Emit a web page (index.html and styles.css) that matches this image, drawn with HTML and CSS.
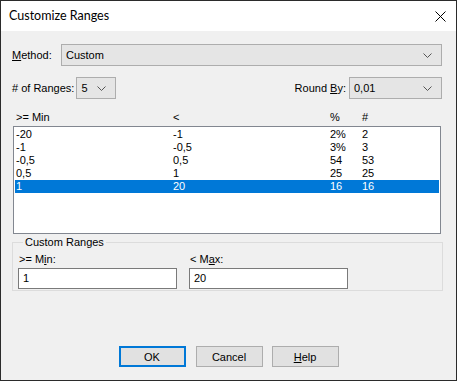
FILE: index.html
```html
<!DOCTYPE html>
<html>
<head>
<meta charset="utf-8">
<link rel="stylesheet" href="styles.css">
</head>
<body>
<div class="window">
  <div class="titlebar">
    <span class="title">Customize Ranges</span>
    <span class="close"><svg width="11" height="11" viewBox="0 0 11 11"><path d="M0.5 0.5 L10.5 10.5 M10.5 0.5 L0.5 10.5" stroke="#000" stroke-width="1" fill="none"/></svg></span>
  </div>
  <div class="content">
    <div class="row method-row">
      <label class="lbl method-lbl"><u>M</u>ethod:</label>
      <div class="combo combo-method"><span>Custom</span><svg class="chev" width="9" height="5" viewBox="0 0 9 5"><path d="M0.5 0.5 L4.5 4.5 L8.5 0.5" stroke="#555" fill="none"/></svg></div>
    </div>
    <div class="row ranges-row">
      <label class="lbl"># of Ran<u>g</u>es:</label>
      <div class="combo combo-small"><span>5</span><svg class="chev" width="9" height="5" viewBox="0 0 9 5"><path d="M0.5 0.5 L4.5 4.5 L8.5 0.5" stroke="#555" fill="none"/></svg></div>
      <div class="spacer"></div>
      <label class="lbl">Round <u>B</u>y:</label>
      <div class="combo combo-round"><span>0,01</span><svg class="chev" width="9" height="5" viewBox="0 0 9 5"><path d="M0.5 0.5 L4.5 4.5 L8.5 0.5" stroke="#555" fill="none"/></svg></div>
    </div>
    <div class="list-head">
      <span class="c1">&gt;= Min</span><span class="c2">&lt;</span><span class="c3">%</span><span class="c4">#</span>
    </div>
    <div class="listbox">
      <div class="lrow"><span class="c1">-20</span><span class="c2">-1</span><span class="c3">2%</span><span class="c4">2</span></div>
      <div class="lrow"><span class="c1">-1</span><span class="c2">-0,5</span><span class="c3">3%</span><span class="c4">3</span></div>
      <div class="lrow"><span class="c1">-0,5</span><span class="c2">0,5</span><span class="c3">54</span><span class="c4">53</span></div>
      <div class="lrow"><span class="c1">0,5</span><span class="c2">1</span><span class="c3">25</span><span class="c4">25</span></div>
      <div class="lrow selected"><span class="c1">1</span><span class="c2">20</span><span class="c3">16</span><span class="c4">16</span></div>
    </div>
    <fieldset class="group">
      <legend>Custom Ranges</legend>
      <div class="field">
        <label class="lbl">&gt;= M<u>i</u>n:</label>
        <div class="input">1</div>
      </div>
      <div class="field">
        <label class="lbl">&lt; M<u>a</u>x:</label>
        <div class="input">20</div>
      </div>
    </fieldset>
  </div>
  <div class="buttons">
    <div class="btn default">OK</div>
    <div class="btn">Cancel</div>
    <div class="btn help"><u>H</u>elp</div>
  </div>
</div>
</body>
</html>
```
FILE: styles.css
```css
html, body {
  margin: 0;
  padding: 0;
  background: #f0f0f0;
}
body {
  font-family: "Liberation Sans", Arial, sans-serif;
  font-size: 11px;
  color: #000;
}
u { text-decoration: underline; text-underline-offset: 1px; }
.window {
  width: 457px;
  height: 381px;
  box-sizing: border-box;
  border: 1px solid #2b2b2b;
  background: #f0f0f0;
  display: flex;
  flex-direction: column;
}
.titlebar {
  height: 30px;
  background: #fff;
  display: flex;
  align-items: center;
  padding-left: 8px;
  padding-right: 10px;
  flex: none;
}
.title {
  font-family: "Lato", "Noto Sans", sans-serif;
  font-size: 12.5px;
  flex: 1;
  color: #000;
  padding-bottom: 1px;
}
.close { display: flex; }
.content {
  padding: 13px 14px 0 11px;
}
.row {
  display: flex;
  align-items: center;
}
.lbl { white-space: nowrap; }
.method-lbl { width: 49px; }
.combo {
  box-sizing: border-box;
  height: 22px;
  border: 1px solid #adadad;
  background: #e5e5e5;
  display: flex;
  align-items: center;
  padding: 0 9px 0 4px;
}
.combo span { flex: 1; }
.combo-method { flex: 1; }
.ranges-row { margin-top: 11px; }
.ranges-row .lbl:first-child { margin-right: 2px; }
.combo-small { width: 40px; }
.combo-round { width: 93px; margin-left: 3px; }
.spacer { flex: 1; }
.list-head {
  display: flex;
  height: 13px;
  line-height: 13px;
  margin-top: 12px;
  padding-left: 4px;
  margin-bottom: 2px;
}
.c1 { width: 157px; }
.c2 { width: 157px; }
.c3 { width: 32px; }
.c4 { width: 40px; }
.listbox {
  box-sizing: border-box;
  margin-left: 1px;
  margin-right: 1px;
  height: 108px;
  border: 1px solid #828790;
  background: #fff;
  padding: 1px;
}
.lrow {
  display: flex;
  height: 13px;
  line-height: 13px;
  padding-left: 1px;
}
.lrow.selected {
  background: #0078d7;
  color: #fff;
}
.group {
  margin: 3px -1px 0 0;
  border: 1px solid #dcdcdc;
  padding: 5px 0 4px 5px;
  display: flex;
  gap: 12px;
  height: 54px;
  box-sizing: border-box;
  min-width: 0;
}
.group legend {
  padding: 0 2px;
  margin-left: 5px;
  line-height: 11px;
}
.field { display: flex; flex-direction: column; }
.field .lbl { line-height: 13px; margin-left: 1px; }
.input {
  box-sizing: border-box;
  margin-top: 2px;
  width: 159px;
  height: 21px;
  border: 1px solid #7a7a7a;
  background: #fff;
  padding-left: 4px;
  line-height: 19px;
}
.buttons {
  margin-top: auto;
  margin-bottom: 13px;
  display: flex;
  justify-content: center;
  gap: 10px;
}
.btn {
  box-sizing: border-box;
  width: 67px;
  height: 21px;
  border: 1px solid #adadad;
  background: #e1e1e1;
  display: flex;
  align-items: center;
  justify-content: center;
}
.btn.help { margin-left: -1px; }
.btn.default { border: 2px solid #0078d7; }
```
